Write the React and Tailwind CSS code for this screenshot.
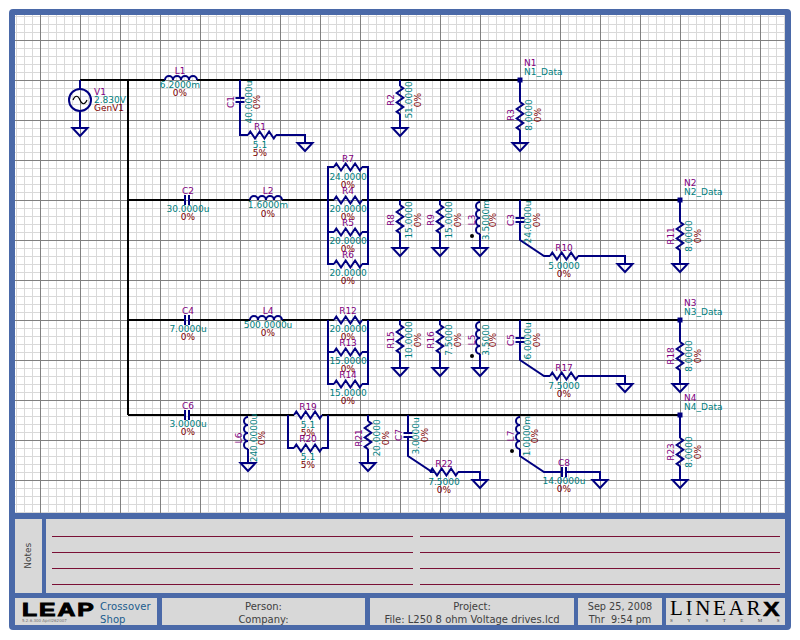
const navy = '#000080';

const range = (from, to, step) => {
  const out = [];
  for (let v = from; v <= to; v += step) out.push(v);
  return out;
};

const colors = { name: 'fill-[#800080]', value: 'fill-[#008080]', pct: 'fill-[#800000]' };

// centred label, y is the middle of the text
function Label({ x, y, kind, children, vertical }) {
  return (
    <text
      x={x}
      y={y}
      textAnchor="middle"
      dominantBaseline="central"
      transform={vertical ? `rotate(-90 ${x} ${y})` : undefined}
      className={colors[kind]}
    >
      {children}
    </text>
  );
}

function Triple({ x, name, value, pct, y1, y2, y3 }) {
  return (
    <>
      <Label x={x} y={y1} kind="name">{name}</Label>
      <Label x={x} y={y2} kind="value">{value}</Label>
      <Label x={x} y={y3} kind="pct">{pct}</Label>
    </>
  );
}

function VTriple({ y, name, value, pct, x1, x2, x3, vy }) {
  return (
    <>
      <Label x={x1} y={y} kind="name" vertical>{name}</Label>
      <Label x={x2} y={vy ?? y} kind="value" vertical>{value}</Label>
      <Label x={x3} y={y} kind="pct" vertical>{pct}</Label>
    </>
  );
}

const Wire = ({ d }) => <path d={d} fill="none" stroke={navy} strokeWidth="2" />;
const Main = ({ d }) => <path d={d} fill="none" stroke="#000" strokeWidth="2" />;

function Ground({ x, y }) {
  return <path d={`M${x - 7.5} ${y}H${x + 7.5}L${x} ${y + 8}Z`} fill="none" stroke={navy} strokeWidth="2" />;
}

function ResH({ x, y }) {
  return <Wire d={`M${x} ${y}l2.3 -3.5l4.7 7l4.7 -7l4.7 7l4.7 -7l4.7 7l2.3 -3.5`} />;
}

function ResV({ x, y }) {
  return <Wire d={`M${x} ${y}l3.3 2.3l-6.6 4.7l6.6 4.7l-6.6 4.7l6.6 4.7l-6.6 4.7l3.3 2.3`} />;
}

function IndH({ x, y }) {
  return <Wire d={`M${x} ${y}a4 4 0 0 1 8 0a4 4 0 0 1 8 0a4 4 0 0 1 8 0a4 4 0 0 1 8 0`} />;
}

function IndV({ x, y }) {
  return <Wire d={`M${x} ${y}a4 4 0 0 0 0 8a4 4 0 0 0 0 8a4 4 0 0 0 0 8a4 4 0 0 0 0 8`} />;
}

function CapH({ x, y }) {
  return <Wire d={`M${x - 2} ${y - 5}v10M${x + 2} ${y - 5}v10`} />;
}

function CapV({ x, y }) {
  return <Wire d={`M${x - 4.5} ${y - 2}h9M${x - 4.5} ${y + 2}h9`} />;
}

// shunt resistor from the rail down to a ground
function ShuntR({ x, rail, top, gnd, name, value, pct, cy }) {
  return (
    <>
      <Wire d={`M${x} ${rail}V${top}M${x} ${top + 28}V${gnd}`} />
      <ResV x={x} y={top} />
      <Ground x={x} y={gnd} />
      <VTriple y={cy} x1={x - 9} x2={x + 9} x3={x + 18} name={name} value={value} pct={pct} />
    </>
  );
}

function ShuntL({ x, rail, gnd, name, value, cy, dotY }) {
  return (
    <>
      <IndV x={x} y={rail + 2} />
      <Wire d={`M${x} ${rail + 34}V${gnd}`} />
      <Ground x={x} y={gnd} />
      <circle cx={x - 8} cy={dotY} r="2" fill="#000" />
      <VTriple y={cy} x1={x - 8} x2={x + 6} x3={x + 13} name={name} value={value} pct="0%" />
    </>
  );
}

function Node({ x, y, n }) {
  return (
    <>
      <rect x={x - 2.5} y={y - 2.5} width="5" height="5" fill={navy} />
      <text x={x + 4} y={y - 17} dominantBaseline="central" className="fill-[#800080]">{n}</text>
      <text x={x + 4} y={y - 8} dominantBaseline="central" className="fill-[#008080]">{n}_Data</text>
    </>
  );
}

// capacitor branch going to a series resistor and ground
function Zobel({ x, rail, capY, name, value, vy, rName, rValue, rx, ry, gx }) {
  return (
    <>
      <Wire d={`M${x} ${rail}V${capY - 2}M${x} ${capY + 2}V${ry - 16}L${x + 24} ${ry}H${rx}M${rx + 28} ${ry}H${gx}V${ry + 8}`} />
      <CapV x={x} y={capY} />
      <ResH x={rx} y={ry} />
      <Ground x={gx} y={ry + 8} />
      <VTriple y={capY} vy={vy} x1={x - 9} x2={x + 8} x3={x + 17} name={name} value={value} pct="0%" />
      <Triple x={rx + 14} y1={ry - 8} y2={ry + 10} y3={ry + 18} name={rName} value={rValue} pct="0%" />
    </>
  );
}

function Schematic() {
  return (
    <svg
      viewBox="15 15 770 498"
      width="770"
      height="498"
      className="block bg-white font-['DejaVu_Sans',sans-serif] text-[9px]"
    >
      <g shapeRendering="crispEdges">
        {range(16, 784, 8).map((x) => (
          <line key={x} x1={x + 0.5} y1="15" x2={x + 0.5} y2="513" stroke="#d9d9d9" />
        ))}
        {range(16, 512, 8).map((y) => (
          <line key={y} x1="15" y1={y + 0.5} x2="785" y2={y + 0.5} stroke="#d9d9d9" />
        ))}
        {range(40, 760, 40).map((x) => (
          <line key={x} x1={x + 0.5} y1="15" x2={x + 0.5} y2="513" stroke="#808080" />
        ))}
        {range(40, 480, 40).map((y) => (
          <line key={y} x1="15" y1={y + 0.5} x2="785" y2={y + 0.5} stroke="#808080" />
        ))}
      </g>

      {/* rails */}
      <Main d="M80 80H165M197 80H520" />
      <Main d="M128 80V415" />
      <Main d="M128 200H185M189 200H250M282 200H334M362 200H680" />
      <Main d="M128 320H185M189 320H250M282 320H334M362 320H680" />
      <Main d="M128 415H185M189 415H294M322 415H680" />

      {/* source */}
      <Wire d="M80 80V89M80 111V128" />
      <circle cx="80" cy="100" r="11" fill="none" stroke={navy} strokeWidth="2" />
      <path d="M73 100c2 -5 5 -5 7 0s5 5 7 0" fill="none" stroke="#000" strokeWidth="1.2" />
      <Ground x={80} y={128} />
      <text x="94" y="92" dominantBaseline="central" className="fill-[#800080]">V1</text>
      <text x="94" y="100" dominantBaseline="central" className="fill-[#008080]">2.830V</text>
      <text x="94" y="108" dominantBaseline="central" className="fill-[#800000]">GenV1</text>

      {/* first row */}
      <IndH x={165} y={80} />
      <Triple x={180} y1={71} y2={85} y3={93} name="L1" value="6.2000m" pct="0%" />
      <Wire d="M240 80V98M240 102V135H248M276 135H305V143" />
      <CapV x={240} y={100} />
      <VTriple y={102} vy={102} x1={231} x2={249} x3={257} name="C1" value="40.0000u" pct="0%" />
      <ResH x={248} y={135} />
      <Ground x={305} y={143} />
      <Triple x={260} y1={127} y2={145} y3={153} name="R1" value="5.1" pct="5%" />
      <ShuntR x={400} rail={80} top={86} gnd={128} cy={100} name="R2" value="51.0000" pct="0%" />
      <ShuntR x={520} rail={80} top={102} gnd={143} cy={115} name="R3" value="8.0000" pct="0%" />
      <Node x={520} y={80} n="N1" />

      {/* second row */}
      <CapH x={187} y={200} />
      <Triple x={188} y1={191} y2={209} y3={217} name="C2" value="30.0000u" pct="0%" />
      <IndH x={250} y={200} />
      <Triple x={268} y1={191} y2={205} y3={214} name="L2" value="1.6000m" pct="0%" />
      <Wire d="M334 167H328V264H334M362 167H368V264H362M328 232H334M362 232H368" />
      <ResH x={334} y={167} />
      <ResH x={334} y={200} />
      <ResH x={334} y={232} />
      <ResH x={334} y={264} />
      <Triple x={348} y1={159} y2={177} y3={185} name="R7" value="24.0000" pct="0%" />
      <Triple x={348} y1={191} y2={209} y3={217} name="R4" value="20.0000" pct="0%" />
      <Triple x={348} y1={223} y2={241} y3={249} name="R5" value="20.0000" pct="0%" />
      <Triple x={348} y1={255} y2={273} y3={281} name="R6" value="20.0000" pct="0%" />
      <ShuntR x={400} rail={200} top={205} gnd={248} cy={220} name="R8" value="15.0000" pct="0%" />
      <ShuntR x={440} rail={200} top={205} gnd={248} cy={220} name="R9" value="15.0000" pct="0%" />
      <ShuntL x={480} rail={200} gnd={248} cy={220} dotY={236} name="L3" value="3.5000m" />
      <Zobel x={520} rail={200} capY={220} vy={222} name="C3" value="24.0000u" rName="R10" rValue="5.0000" rx={550} ry={256} gx={625} />
      <ShuntR x={680} rail={200} top={222} gnd={264} cy={236} name="R11" value="8.0000" pct="0%" />
      <Node x={680} y={200} n="N2" />

      {/* third row */}
      <CapH x={187} y={320} />
      <Triple x={188} y1={311} y2={329} y3={337} name="C4" value="7.0000u" pct="0%" />
      <IndH x={250} y={320} />
      <Triple x={268} y1={311} y2={325} y3={333} name="L4" value="500.0000u" pct="0%" />
      <Wire d="M334 352H328V384H334M362 352H368V384H362M328 320V352M368 320V352" />
      <ResH x={334} y={320} />
      <ResH x={334} y={352} />
      <ResH x={334} y={384} />
      <Triple x={348} y1={311} y2={329} y3={337} name="R12" value="20.0000" pct="0%" />
      <Triple x={348} y1={343} y2={361} y3={369} name="R13" value="15.0000" pct="0%" />
      <Triple x={348} y1={375} y2={393} y3={401} name="R14" value="15.0000" pct="0%" />
      <ShuntR x={400} rail={320} top={325} gnd={368} cy={340} name="R15" value="10.0000" pct="0%" />
      <ShuntR x={440} rail={320} top={325} gnd={368} cy={340} name="R16" value="7.5000" pct="0%" />
      <ShuntL x={480} rail={320} gnd={368} cy={340} dotY={356} name="L5" value="3.5000" />
      <Zobel x={520} rail={320} capY={340} vy={341} name="C5" value="6.0000u" rName="R17" rValue="7.5000" rx={550} ry={376} gx={625} />
      <ShuntR x={680} rail={320} top={342} gnd={384} cy={356} name="R18" value="8.0000" pct="0%" />
      <Node x={680} y={320} n="N3" />

      {/* fourth row */}
      <CapH x={187} y={415} />
      <Triple x={188} y1={406} y2={424} y3={432} name="C6" value="3.0000u" pct="0%" />
      <IndV x={248} y={417} />
      <Wire d="M248 449V463" />
      <Ground x={248} y={463} />
      <VTriple y={438} x1={239} x2={254} x3={262} name="L6" value="240.0000u" pct="0%" />
      <Wire d="M294 448H288V415M322 448H328V415" />
      <ResH x={294} y={415} />
      <ResH x={294} y={448} />
      <Triple x={308} y1={407} y2={425} y3={433} name="R19" value="5.1" pct="5%" />
      <Triple x={308} y1={439} y2={457} y3={465} name="R20" value="5.1" pct="5%" />
      <ShuntR x={368} rail={415} top={421} gnd={463} cy={438} name="R21" value="20.0000" pct="0%" />
      <Zobel x={408} rail={415} capY={435} vy={436} name="C7" value="3.0000u" rName="R22" rValue="7.5000" rx={430} ry={472} gx={480} />
      <IndV x={520} y={417} />
      <Wire d="M520 449V456L544 472H562M566 472H600V480" />
      <circle cx="512" cy="451" r="2" fill="#000" />
      <CapH x={564} y={472} />
      <Ground x={600} y={480} />
      <VTriple y={436} x1={511} x2={527} x3={535} name="L7" value="1.0000m" pct="0%" />
      <Triple x={564} y1={463} y2={481} y3={489} name="C8" value="14.0000u" pct="0%" />
      <ShuntR x={680} rail={415} top={438} gnd={480} cy={452} name="R23" value="8.0000" pct="0%" />
      <Node x={680} y={415} n="N4" />
    </svg>
  );
}

function NoteLines({ className }) {
  return (
    <div className={`flex flex-col gap-[15px] pt-[17px] ${className}`}>
      <div className="h-px bg-[#7a1035]" />
      <div className="h-px bg-[#7a1035]" />
      <div className="h-px bg-[#7a1035]" />
      <div className="h-px bg-[#7a1035]" />
    </div>
  );
}

export default function App() {
  return (
    <div className="w-[800px] h-[640px] bg-white pt-[9px] pl-[9px] font-['DejaVu_Sans',sans-serif]">
      <div className="w-[782px] h-[621px] bg-[#4a69a8] rounded-[4px] pt-[6px] pl-[6px] flex flex-col">
        <Schematic />

        {/* notes */}
        <div className="flex w-[770px] h-[74px] mt-[6px] gap-[4px]">
          <div className="w-[27px] bg-[#d8d8d8] flex items-center justify-center">
            <span className="-rotate-90 text-[9px] text-[#404040]">Notes</span>
          </div>
          <div className="flex-1 bg-[#d8d8d8] flex pl-[6px] pr-[5px] gap-[7px]">
            <NoteLines className="flex-1" />
            <NoteLines className="flex-1" />
          </div>
        </div>

        {/* footer */}
        <div className="flex w-[770px] h-[27px] mt-[5px]">
          <div className="w-[142px] bg-[#d8d8d8] flex">
            <div className="w-[85px] pl-[7px] pt-[4px]">
              <div className="text-[19px] leading-[16px] font-bold text-black font-['Liberation_Sans',sans-serif] tracking-[1.5px] origin-left scale-x-[1.3] [-webkit-text-stroke:1px_black]">LEAP</div>
              <div className="text-[4px] leading-[5px] text-[#707070]">5.2.6.300 April262007</div>
            </div>
            <div className="text-[10px] leading-[13px] pt-[2px] tracking-[0.1px] text-[#1a5c8e]">
              <div>Crossover</div>
              <div>Shop</div>
            </div>
          </div>
          <div className="w-[203px] ml-[5px] bg-[#d8d8d8] text-center text-[10px] leading-[13px] pt-[2px] text-[#404040]">
            <div>Person:</div>
            <div>Company:</div>
          </div>
          <div className="w-[204px] ml-[5px] bg-[#d8d8d8] text-center text-[10px] leading-[13px] pt-[2px] text-[#404040]">
            <div>Project:</div>
            <div>File: L250 8 ohm Voltage drives.lcd</div>
          </div>
          <div className="w-[84px] ml-[4px] bg-[#d8d8d8] text-center text-[9.7px] leading-[13px] pt-[2px] text-[#404040]">
            <div>Sep 25, 2008</div>
            <div className="whitespace-pre">Thr  9:54 pm</div>
          </div>
          <div className="w-[119px] ml-[4px] bg-[#d8d8d8] pl-[4px] pt-[2px] font-['Liberation_Serif',serif] text-black">
            <div className="flex items-center h-[17px] text-[21px] leading-none tracking-[2.7px] font-light">
              LINEAR<span className="font-['Liberation_Sans',sans-serif] font-bold text-[20px] tracking-normal scale-x-[1.25] origin-left [-webkit-text-stroke:0.5px_black]">X</span>
            </div>
            <div className="text-[5px] leading-[5px] tracking-[14.5px] pt-[1px] text-[#303030]">SYSTEMS</div>
          </div>
        </div>
      </div>
    </div>
  );
}
